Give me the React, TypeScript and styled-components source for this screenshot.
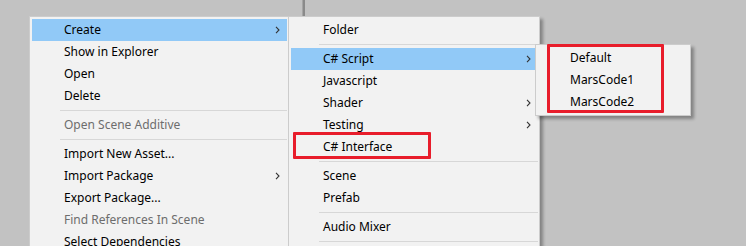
import React from 'react';
import styled, { createGlobalStyle } from 'styled-components';

const GlobalStyle = createGlobalStyle`
  html, body {
    margin: 0;
    padding: 0;
    background: #c2c2c2;
  }
  body {
    font-family: "Noto Sans", "Liberation Sans", sans-serif;
    font-size: 12px;
    color: #000;
  }
`;

const Stage = styled.div`
  position: relative;
  width: 746px;
  height: 246px;
  overflow: hidden;
  background: #c2c2c2;
`;

const Backdrop = styled.div`
  display: flex;
  height: 100%;
`;

const Pane = styled.div<{ $width?: number }>`
  flex: ${(p) => (p.$width ? `0 0 ${p.$width}px` : '1')};
  background: #c2c2c2;
`;

const Splitter = styled.div`
  flex: 0 0 3px;
  background: #8a8a8a;
  border-left: 1px solid #a5a5a5;
  box-sizing: border-box;
`;

const MenuLayer = styled.div`
  position: absolute;
  top: 16px;
  left: 29px;
`;

const MenuBox = styled.div<{ $width: number }>`
  position: relative;
  width: ${(p) => p.$width}px;
  box-sizing: border-box;
  background: #f2f2f2;
  border: 1px solid #cccccc;
  padding: 2px 1px 2px 2px;
  box-shadow: 3px 3px 3px rgba(0, 0, 0, 0.32);
`;

const SubmenuSlot = styled.div<{ $left: number; $top: number }>`
  position: absolute;
  left: calc(100% + ${(p) => p.$left}px);
  top: ${(p) => p.$top}px;
  z-index: 2;
`;

const Item = styled.div<{ $active?: boolean; $disabled?: boolean }>`
  position: relative;
  display: flex;
  align-items: center;
  height: 22px;
  padding-left: 32px;
  padding-right: 7px;
  background: ${(p) => (p.$active ? '#91c9f7' : 'transparent')};
  color: ${(p) => (p.$disabled ? '#6d6d6d' : '#000')};
  white-space: nowrap;
`;

const Label = styled.span`
  flex: 1;
  line-height: 22px;
`;

const Separator = styled.div`
  height: 7px;
  display: flex;
  align-items: center;
  padding-left: 28px;
  &::after {
    content: '';
    flex: 1;
    height: 1px;
    background: #d7d7d7;
  }
`;

const Mark = styled.div<{ $left: number; $top: number; $width: number; $height: number }>`
  position: absolute;
  left: ${(p) => p.$left}px;
  top: ${(p) => p.$top}px;
  width: ${(p) => p.$width}px;
  height: ${(p) => p.$height}px;
  box-sizing: border-box;
  border: 3px solid #e81d2b;
  border-radius: 1px;
  pointer-events: none;
  z-index: 3;
`;

const Chevron = () => (
  <svg width="5" height="8" viewBox="0 0 5 8">
    <path d="M1 0.8 L4 4 L1 7.2" fill="none" stroke="#333" strokeWidth="1.1" />
  </svg>
);

type Entry =
  | { sep: true }
  | {
      sep?: false;
      label: string;
      arrow?: boolean;
      active?: boolean;
      disabled?: boolean;
      mark?: { left: number; top: number; width: number; height: number };
      submenu?: { menu: React.ReactNode; left: number; top: number };
    };

function Menu({ width, entries, children }: { width: number; entries: Entry[]; children?: React.ReactNode }) {
  return (
    <MenuBox $width={width}>
      {entries.map((e, i) =>
        e.sep ? (
          <Separator key={i} />
        ) : (
          <Item key={i} $active={e.active} $disabled={e.disabled}>
            <Label>{e.label}</Label>
            {e.arrow && <Chevron />}
            {e.mark && <Mark $left={e.mark.left} $top={e.mark.top} $width={e.mark.width} $height={e.mark.height} />}
            {e.submenu && (
              <SubmenuSlot $left={e.submenu.left} $top={e.submenu.top}>
                {e.submenu.menu}
              </SubmenuSlot>
            )}
          </Item>
        )
      )}
      {children}
    </MenuBox>
  );
}

const scriptMenu = (
  <Menu
    width={156}
    entries={[{ label: 'Default' }, { label: 'MarsCode1' }, { label: 'MarsCode2' }]}
  >
    <Mark $left={11} $top={-1} $width={117} $height={69} />
  </Menu>
);

const createMenu = (
  <Menu
    width={252}
    entries={[
      { label: 'Folder' },
      { sep: true },
      { label: 'C# Script', arrow: true, active: true, submenu: { menu: scriptMenu, left: -3, top: -4 } },
      { label: 'Javascript' },
      { label: 'Shader', arrow: true },
      { label: 'Testing', arrow: true },
      { label: 'C# Interface', mark: { left: 2, top: -4, width: 138, height: 27 } },
      { sep: true },
      { label: 'Scene' },
      { label: 'Prefab' },
      { sep: true },
      { label: 'Audio Mixer' },
      { sep: true },
    ]}
  />
);

const mainEntries: Entry[] = [
  { label: 'Create', arrow: true, active: true, submenu: { menu: createMenu, left: 1, top: -3 } },
  { label: 'Show in Explorer' },
  { label: 'Open' },
  { label: 'Delete' },
  { sep: true },
  { label: 'Open Scene Additive', disabled: true },
  { sep: true },
  { label: 'Import New Asset...' },
  { label: 'Import Package', arrow: true },
  { label: 'Export Package...' },
  { label: 'Find References In Scene', disabled: true },
  { label: 'Select Dependencies' },
];

export default function App() {
  return (
    <>
      <GlobalStyle />
      <Stage>
        <Backdrop>
          <Pane $width={302} />
          <Splitter />
          <Pane />
        </Backdrop>
        <MenuLayer>
          <Menu width={260} entries={mainEntries} />
        </MenuLayer>
      </Stage>
    </>
  );
}
